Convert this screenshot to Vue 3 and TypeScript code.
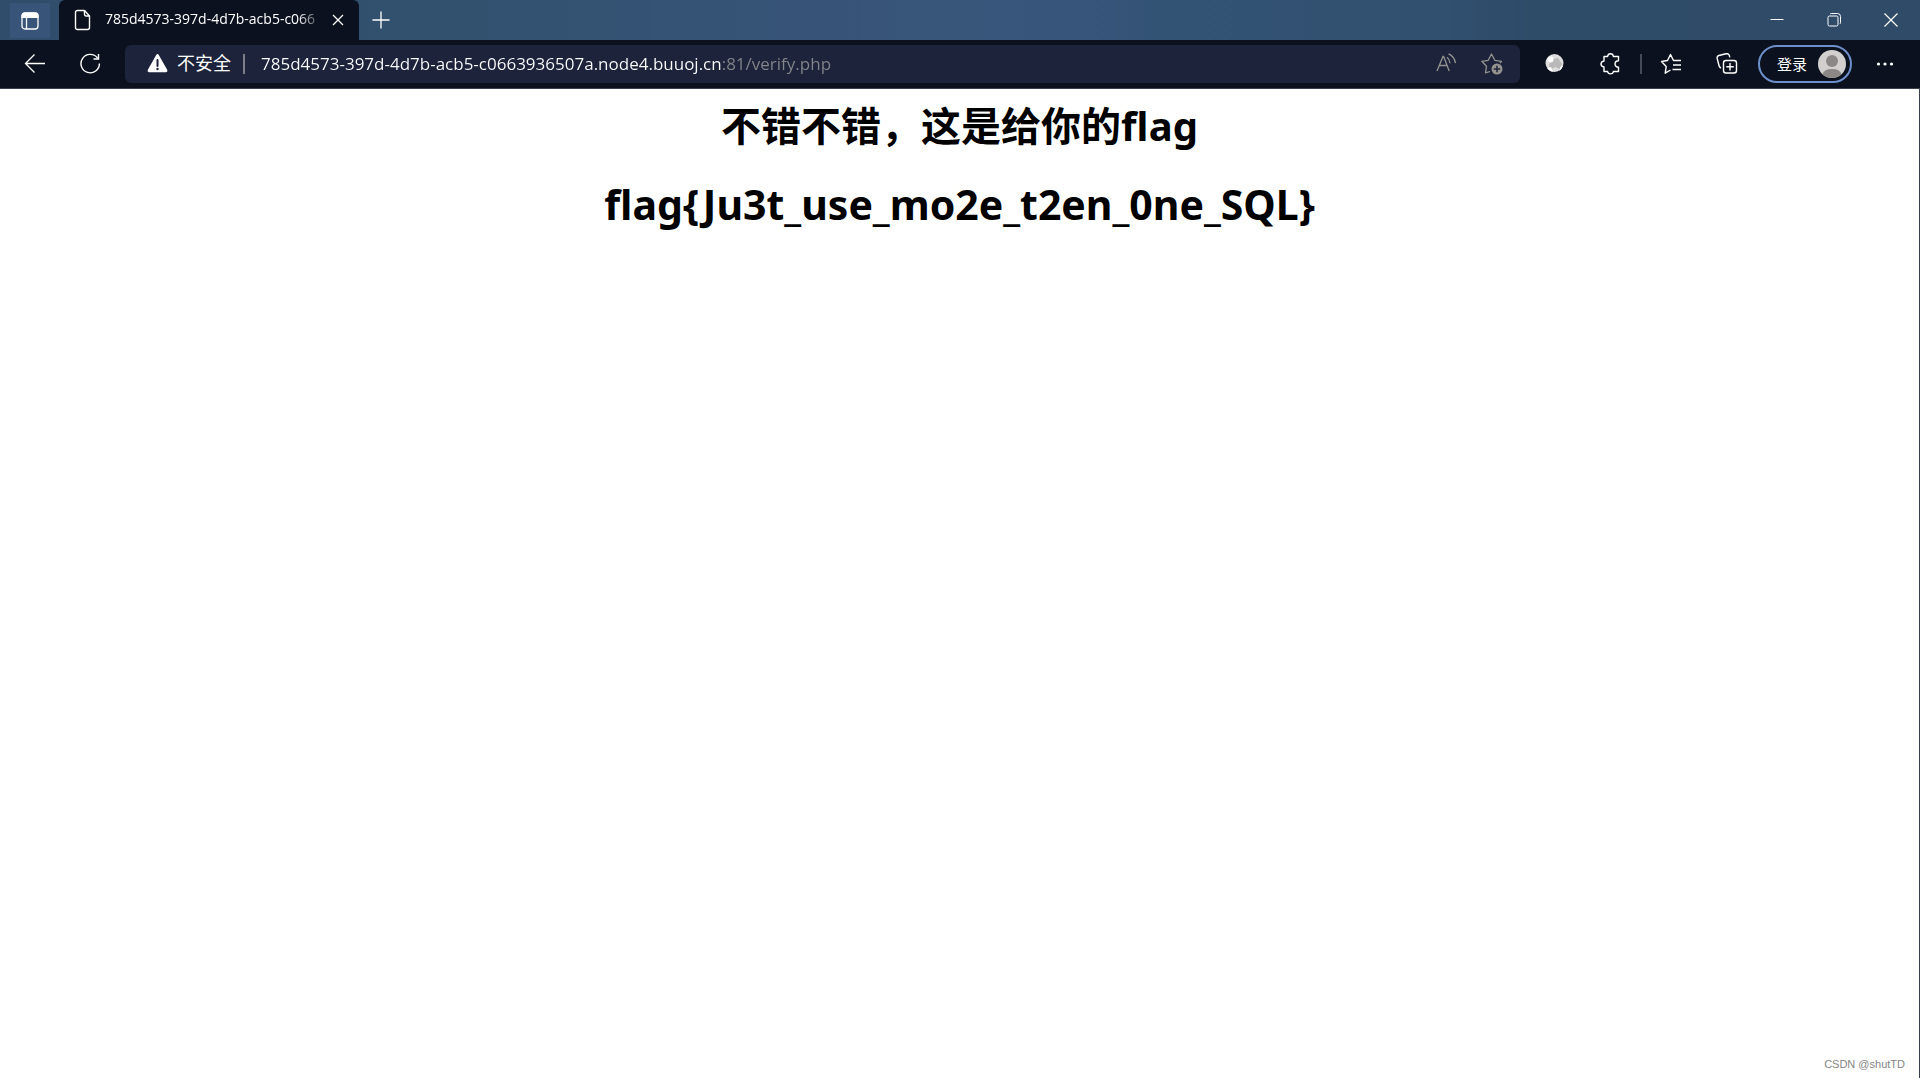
<script setup lang="ts">
import { ref } from 'vue'

const tabTitle = '785d4573-397d-4d7b-acb5-c066'
const address = ref('785d4573-397d-4d7b-acb5-c0663936507a.node4.buuoj.cn:81/verify.php')
</script>

<template>
  <div class="browser" lang="zh-CN">
    <header class="tabs">
      <button class="tab-actions" aria-label="Tab actions">
        <svg width="20" height="20" viewBox="0 0 20 20">
          <rect x="2" y="2" width="16" height="16" rx="3" fill="none" stroke="#fff" stroke-width="1.3" />
          <path d="M1.5 7V4.5a3 3 0 0 1 3-3h11a3 3 0 0 1 3 3V7z" fill="#fff" />
          <path d="M6.5 6v12" stroke="#fff" stroke-width="1.3" />
        </svg>
      </button>
      <div class="tab">
        <svg width="18" height="22" viewBox="0 0 18 22" fill="none" stroke="#fff" stroke-width="1.4" stroke-linejoin="round">
          <path d="M3.5 1.5h7l5 5.5v11.5a2 2 0 0 1-2 2h-10a2 2 0 0 1-2-2v-15a2 2 0 0 1 2-2z" />
          <path d="M10.5 1.8v3.7a1.500 1.500 0 0 0 1.500 1.500h3.500" />
        </svg>
        <span class="title">{{ tabTitle }}</span>
        <button class="close" aria-label="Close tab">
          <svg width="12" height="12" viewBox="0 0 12 12" stroke="#fff" stroke-width="1.3"><path d="M1 1l10 10M11 1L1 11" /></svg>
        </button>
      </div>
      <button class="new-tab" aria-label="New tab">
        <svg width="18" height="18" viewBox="0 0 18 18" stroke="#fff" stroke-width="1.3"><path d="M9 .5v17M.5 9h17" /></svg>
      </button>
      <div class="window-controls">
        <button aria-label="Minimize">
          <svg width="14" height="14" viewBox="0 0 14 14" stroke="#fff"><path d="M.5 6.500h13" /></svg>
        </button>
        <button aria-label="Restore">
          <svg width="14" height="14" viewBox="0 0 14 14" fill="none" stroke="#fff">
            <rect x="1" y="3" width="10" height="10" rx="1.500" />
            <path d="M3 1.200q.5-.7 1.500-.7h6a3 3 0 0 1 3 3v6q0 1-.7 1.500" />
          </svg>
        </button>
        <button aria-label="Close window">
          <svg width="14" height="14" viewBox="0 0 14 14" stroke="#fff" stroke-width="1.2"><path d="M.5.5l13 13M13.500.5l-13 13" /></svg>
        </button>
      </div>
    </header>

    <nav class="toolbar">
      <button aria-label="Back">
        <svg width="22" height="22" viewBox="0 0 22 22" fill="none" stroke="#fff" stroke-width="1.3"><path d="M21 10.500H1.500M10.500 1.500l-9 9 9 9" /></svg>
      </button>
      <button aria-label="Refresh">
        <svg width="22" height="22" viewBox="0 0 22 22" fill="none" stroke="#fff" stroke-width="1.4">
          <path d="M19.400 10.500A9.200 9.200 0 1 1 17.500 5" /><path d="M18.500 1v5h-5" />
        </svg>
      </button>
      <div class="address">
        <svg width="22" height="20" viewBox="0 0 22 20">
          <path d="M10.500 0q.8 0 1.300.9l8.500 15q.7 2-1.300 2.300H2q-2-.3-1.300-2.300l8.500-15Q9.700 0 10.500 0z" fill="#fff" />
          <path d="M10.500 6v6" stroke="#1c233b" stroke-width="2" stroke-linecap="round" /><circle cx="10.500" cy="15" r="1.200" fill="#1c233b" />
        </svg>
        <label class="insecure" for="url">不安全</label>
        <span class="rule"></span>
        <input id="url" v-model="address" class="url" type="text" spellcheck="false" />
        <button aria-label="Read aloud">
          <svg width="22" height="22" viewBox="0 0 22 22" fill="none" stroke="#94938f" stroke-width="1.3">
            <path d="M1 18L7 3.500h.6L13.200 18M3.200 12.500h8" />
            <path d="M11 4.200q2.600 1.800 3 6M12.500.8q6 2.500 7 9.400" />
          </svg>
        </button>
        <button aria-label="Add to favorites">
          <svg width="22" height="22" viewBox="0 0 22 22">
            <path d="M9 18.500l-4.500 1.300 1-6.500L.8 8.300l6.400-1L10.500 1l3.300 6.300 6.700 1-1.500 1.700" fill="none" stroke="#94938f" stroke-width="1.300" stroke-linejoin="round" />
            <circle cx="16" cy="16" r="5.500" fill="#94938f" /><path d="M16 12.800v6.400M12.800 16h6.400" stroke="#1c233b" stroke-width="1.500" />
          </svg>
        </button>
      </div>
      <button aria-label="Extension">
        <svg width="20" height="20" viewBox="0 0 20 20">
          <circle cx="9.500" cy="9" r="9" fill="#dedede" />
          <path d="M4 10l4-5 5-1 4 6-2 5-5-2-3 2-3-2z" fill="#b9b9b9" />
          <circle cx="5.500" cy="5.500" r="3" fill="#fff" /><path d="M2 14l4-1 2 5q-4-1-6-4z" fill="#fff" />
          <path d="M16 12l2 0q-1 3-4 5z" fill="#fff" />
        </svg>
      </button>
      <button aria-label="Extensions">
        <svg width="22" height="22" viewBox="0 0 22 22" fill="none" stroke="#fff" stroke-width="1.4" stroke-linejoin="round">
          <path d="M4 3.500h3.600c.4-3.700 5.400-3.700 5.800 0H18.500v4.200c-4.600 0-4.600 6.600 0 6.600v4.200h-5.100c-.4 3.200-5.400 3.200-5.800 0H4v-4.600c-4-.4-4-5.400 0-5.800z" />
        </svg>
      </button>
      <span class="rule dim"></span>
      <button aria-label="Favorites">
        <svg width="22" height="22" viewBox="0 0 22 22" fill="none" stroke="#fff" stroke-width="1.4" stroke-linejoin="round">
          <path d="M10.500 17l-5.300 3.200 1-6.700L1.500 8.500l6-1L10.500 1.500l3 6h7.500M13 12h8M12.500 16.500H21" />
        </svg>
      </button>
      <button aria-label="Collections">
        <svg width="22" height="22" viewBox="0 0 22 22" fill="none" stroke="#fff" stroke-width="1.4">
          <rect x="7.500" y="7.500" width="13" height="12.500" rx="2.500" /><path d="M14 10v7.500M10.300 13.800h7.500" />
          <path d="M5 15q-1.500-.5-2-2.500L1.200 5.500q-.5-2.300 1.600-3L10 .8q2.600-.6 3.300 1.600l.5 2" />
        </svg>
      </button>
      <button class="login">
        <span class="login-text">登录</span>
        <svg width="28" height="28" viewBox="0 0 28 28">
          <circle cx="14" cy="14" r="14" fill="#d2d0ce" /><circle cx="14" cy="11" r="6" fill="#8b8784" />
          <path d="M4.500 24.200q1.500-5.200 9.500-5.200t9.500 5.200a14 14 0 0 1-19 0z" fill="#8b8784" />
        </svg>
      </button>
      <button aria-label="Settings and more">
        <svg width="18" height="6" viewBox="0 0 18 6" fill="#fff"><circle cx="2.500" cy="3" r="1.600" /><circle cx="9" cy="3" r="1.600" /><circle cx="15.500" cy="3" r="1.600" /></svg>
      </button>
    </nav>

    <main class="page">
      <h1>不错不错，这是给你的flag</h1>
      <h2>flag{Ju3t_use_mo2e_t2en_0ne_SQL}</h2>
      <footer>CSDN @shutTD</footer>
    </main>
  </div>
</template>

<style>
body {
  margin: 0;
}
</style>

<style scoped>
.browser {
  display: flex;
  flex-direction: column;
  min-height: 100vh;
  background: #fff;
  font-family: "Open Sans", "Noto Sans CJK SC", sans-serif;
}
button {
  display: flex;
  align-items: center;
  justify-content: center;
  flex: none;
  width: 22px;
  padding: 0;
  border: 0;
  background: none;
  color: #fff;
  font: inherit;
}
svg {
  display: block;
  flex: none;
}
.tabs {
  display: flex;
  height: 40px;
  background: linear-gradient(90deg, #304d6c 0%, #32516f 24%, #38557a 48%, #37547a 57%, #335375 60%, #31506f 75%, #2e4b68 80%, #2f4b68 100%);
}
.tab-actions {
  width: 40px;
  height: 35px;
  margin: 3px 9px 0 10px;
  background: #385478;
}
.tab {
  display: flex;
  align-items: center;
  box-sizing: border-box;
  width: 300px;
  padding: 0 11px 0 15px;
  border-radius: 6px 6px 0 0;
  background: #0b111e;
}
.title {
  flex: 1;
  min-width: 0;
  margin: 0 4px 0 13px;
  padding-bottom: 2px;
  color: #fff;
  font-size: 14px;
  line-height: 24px;
  white-space: nowrap;
  mask-image: linear-gradient(90deg, #000 88%, transparent);
}
.close {
  width: 20px;
}
.new-tab {
  width: 44px;
}
.window-controls {
  display: flex;
  margin: 0 1px 0 auto;
}
.window-controls button {
  width: 57px;
}
.toolbar {
  display: flex;
  align-items: center;
  gap: 34px;
  height: 48px;
  padding: 0 24px;
  border-bottom: 1px solid #3b3e4b;
  background: #0b111e;
}
.address {
  display: flex;
  align-items: center;
  flex: 1;
  box-sizing: border-box;
  height: 38px;
  margin: 0 -10px 0 -11px;
  padding: 0 17px 0 22px;
  border-radius: 6px;
  background: #1c233b;
}
.address button + button {
  margin-left: 23px;
}
.insecure {
  margin: 0 12px 0 8px;
  padding-bottom: 2px;
  color: #fff;
  font-size: 18px;
  line-height: 24px;
}
.rule {
  flex: none;
  width: 2px;
  height: 20px;
  background: #7b7e89;
}
.dim {
  margin: 0 -16px;
  background: #474b57;
}
.url {
  flex: 1;
  min-width: 0;
  height: 30px;
  margin-left: 16px;
  padding: 0 0 2px;
  border: 0;
  outline: 0;
  background: linear-gradient(90deg, #fff 461px, #84858a 461px);
  background-clip: text;
  -webkit-text-fill-color: transparent;
  font: inherit;
  font-size: 17px;
}
.login {
  justify-content: flex-end;
  gap: 11px;
  box-sizing: border-box;
  width: 94px;
  height: 38px;
  margin: 0 -12px 0 -14px;
  padding-right: 4px;
  border: 2px solid #6d90cb;
  border-radius: 19px;
  font-size: 15px;
}
.login-text {
  padding-bottom: 2px;
}
.page {
  display: flex;
  flex: 1;
  flex-direction: column;
  align-items: center;
  padding-top: 8px;
  border-right: 1px solid #3b3e4b;
}
h1,
h2 {
  margin: 0 0 20px;
  font-family: "Noto Sans", "Noto Sans CJK SC", sans-serif;
  font-size: 40px;
  line-height: 58px;
}
h2 {
  font-size: 41px;
}
footer {
  align-self: flex-end;
  margin: auto 14px 6px;
  color: #858585;
  font-family: "Liberation Sans", sans-serif;
  font-size: 11px;
  line-height: 16px;
}
</style>
